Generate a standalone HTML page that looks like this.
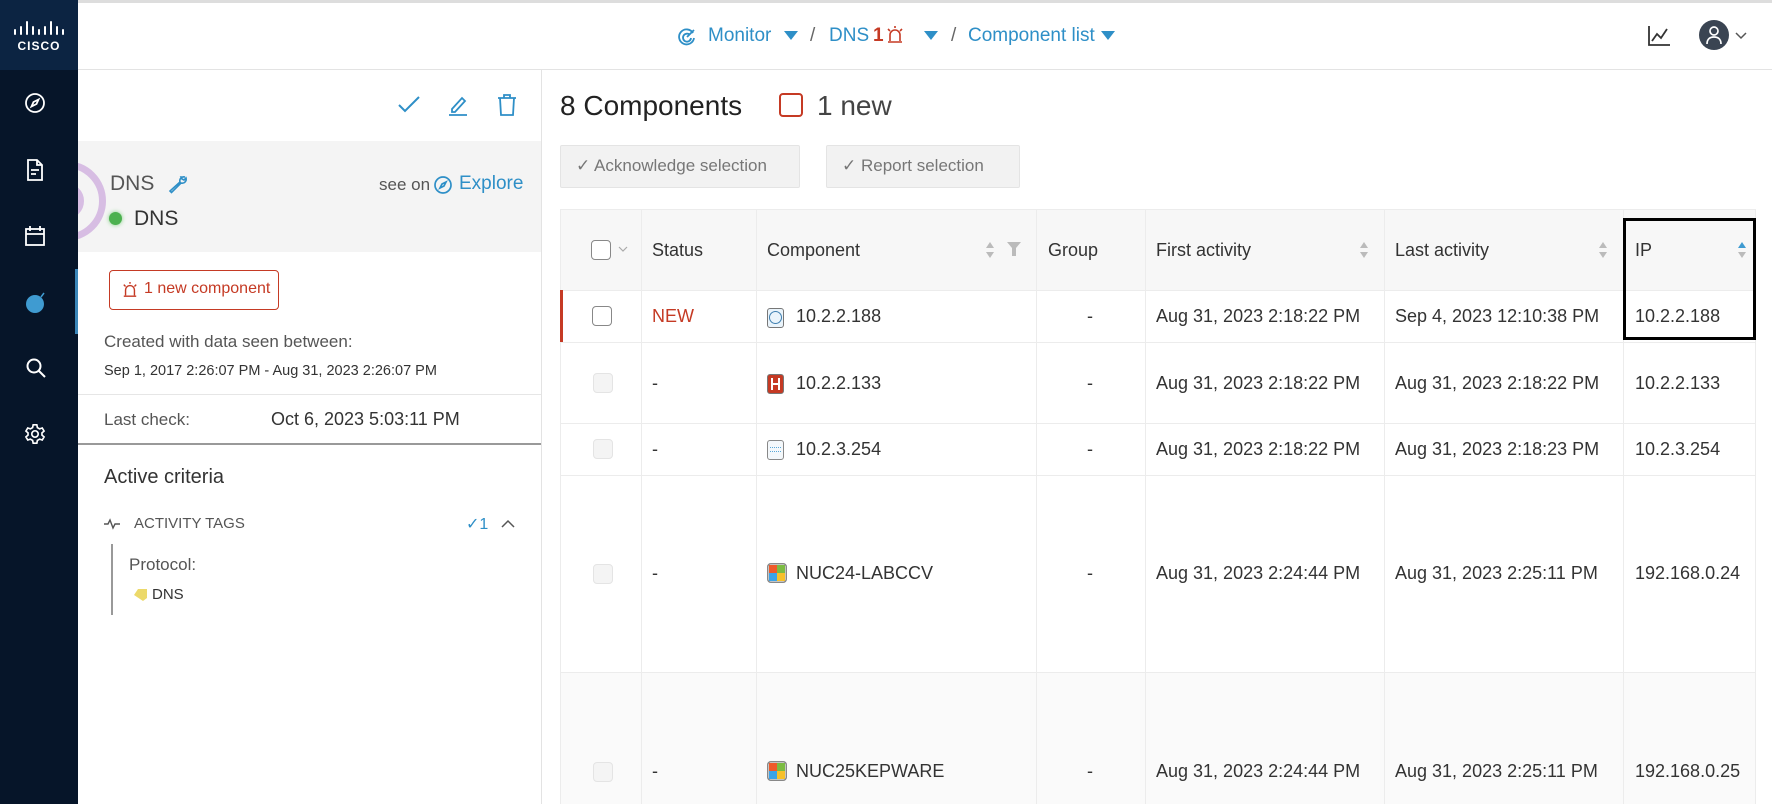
<!DOCTYPE html>
<html><head><meta charset="utf-8"><style>
*{box-sizing:border-box;margin:0;padding:0}
body{width:1772px;height:804px;overflow:hidden;background:#fff;font-family:"Liberation Sans",sans-serif;color:#333;position:relative}
.abs{position:absolute}
.side{left:0;top:0;width:78px;height:804px;background:#061529}
.logo{left:0;top:0;width:78px;height:70px;background:#0c2442}
.hdr{left:78px;top:0;width:1694px;height:70px;border-top:3px solid #ddd;border-bottom:1px solid #e3e3e3;background:#fff}
.blue{color:#2e8fc7}
.t{position:absolute;white-space:nowrap}
.vl{position:absolute;top:209px;width:1px;height:595px;background:#ececec}
.hl{position:absolute;left:560px;width:1195px;height:1px;background:#ececec}
.cb{position:absolute;width:20px;height:20px;border:1.5px solid #888;border-radius:4px;background:#fff}
.cbd{position:absolute;width:20px;height:20px;border:1px solid #e4e4e4;border-radius:4px;background:#f4f4f4}
.cell{font-size:18px;color:#333}
</style></head><body>
<div class="abs side"></div>
<div class="abs logo"></div>
<svg class="abs" style="left:12px;top:20px" width="54" height="34" viewBox="0 0 54 34">
<g stroke="#fff" stroke-width="2" stroke-linecap="round">
<line x1="3" y1="10" x2="3" y2="14"/><line x1="9" y1="7" x2="9" y2="14"/><line x1="15" y1="2" x2="15" y2="14"/><line x1="21" y1="7" x2="21" y2="14"/><line x1="27" y1="10" x2="27" y2="14"/><line x1="33" y1="7" x2="33" y2="14"/><line x1="39" y1="2" x2="39" y2="14"/><line x1="45" y1="7" x2="45" y2="14"/><line x1="51" y1="10" x2="51" y2="14"/></g>
<text x="27" y="30" fill="#fff" font-size="12" font-weight="bold" text-anchor="middle" font-family="Liberation Sans" letter-spacing="1">CISCO</text></svg>
<!-- sidebar icons -->
<svg class="abs" style="left:24px;top:92px" width="22" height="22" viewBox="0 0 22 22" fill="none" stroke="#fff" stroke-width="1.8"><circle cx="11" cy="11" r="9"/><path d="M14.5 7.5 L9.5 10 L7.5 14.5 L12.5 12 Z"/></svg>
<svg class="abs" style="left:25px;top:158px" width="20" height="24" viewBox="0 0 20 24" fill="none" stroke="#fff" stroke-width="1.8"><path d="M3 2h9l5 5v15H3z M12 2v5h5 M6 12h8 M6 16h5"/></svg>
<svg class="abs" style="left:24px;top:225px" width="22" height="22" viewBox="0 0 22 22" fill="none" stroke="#fff" stroke-width="1.8"><rect x="2" y="4" width="18" height="16"/><path d="M2 9h18 M6 1v5 M16 1v5"/></svg>
<div class="abs" style="left:75px;top:269px;width:3px;height:65px;background:#3b86b8"></div>
<svg class="abs" style="left:24px;top:291px" width="24" height="24" viewBox="0 0 24 24"><circle cx="11" cy="13" r="9" fill="#3f9bd1"/><path d="M17 6l3-4" stroke="#3f9bd1" stroke-width="1.5"/></svg>
<svg class="abs" style="left:25px;top:357px" width="22" height="22" viewBox="0 0 22 22" fill="none" stroke="#fff" stroke-width="2"><circle cx="9" cy="9" r="6.5"/><path d="M14 14l6 6"/></svg>
<svg class="abs" style="left:24px;top:423px" width="22" height="22" viewBox="0 0 24 24" fill="none" stroke="#fff" stroke-width="1.8"><circle cx="12" cy="12" r="3.5"/><path d="M10 2h4l.6 3 2.4 1.4 2.9-1 2 3.4-2.3 2v2.4l2.3 2-2 3.4-2.9-1L14.6 19 14 22h-4l-.6-3-2.4-1.4-2.9 1-2-3.4 2.3-2v-2.4l-2.3-2 2-3.4 2.9 1L9.4 5z"/></svg>
<!-- header -->
<div class="abs hdr"></div>
<svg class="abs" style="left:678px;top:28px" width="18" height="18" viewBox="0 0 18 18" fill="none" stroke="#2e8fc7" stroke-width="1.8"><path d="M15 5A7.5 7.5 0 1 0 16 10"/><path d="M12 7A4 4 0 1 0 13 10"/><path d="M9 9l7-7"/></svg>
<div class="t blue" style="left:708px;top:25px;font-size:19px">Monitor</div>
<svg class="abs" style="left:784px;top:31px" width="14" height="10"><path d="M0 0h14L7 9z" fill="#2e8fc7"/></svg>
<div class="t" style="left:810px;top:25px;font-size:19px;color:#666">/</div>
<div class="t blue" style="left:829px;top:25px;font-size:19px">DNS</div>
<div class="t" style="left:873px;top:25px;font-size:19px;color:#c53a24;font-weight:bold">1</div>
<svg class="abs" style="left:886px;top:25px" width="18" height="20" viewBox="0 0 18 20" fill="none" stroke="#c53a24" stroke-width="1.6"><path d="M4 16V10a5 5 0 0 1 10 0v6 M2 17h14 M9 1v2 M2 4l2 2 M16 4l-2 2"/></svg>
<svg class="abs" style="left:924px;top:31px" width="14" height="10"><path d="M0 0h14L7 9z" fill="#2e8fc7"/></svg>
<div class="t" style="left:951px;top:25px;font-size:19px;color:#666">/</div>
<div class="t blue" style="left:968px;top:25px;font-size:19px">Component list</div>
<svg class="abs" style="left:1101px;top:31px" width="14" height="10"><path d="M0 0h14L7 9z" fill="#2e8fc7"/></svg>
<svg class="abs" style="left:1647px;top:25px" width="24" height="22" viewBox="0 0 24 22" fill="none" stroke="#333" stroke-width="1.8"><path d="M2 1v19h21 M5 16l5-7 4 4 6-9"/></svg>
<div class="abs" style="left:1699px;top:20px;width:30px;height:30px;border-radius:50%;background:#3a4452"></div>
<svg class="abs" style="left:1705px;top:25px" width="18" height="20" viewBox="0 0 18 20" fill="none" stroke="#fff" stroke-width="1.7"><circle cx="9" cy="6" r="4"/><path d="M2 19c0-5 3-7 7-7s7 2 7 7"/></svg>
<svg class="abs" style="left:1735px;top:32px" width="12" height="8" fill="none" stroke="#555" stroke-width="1.5"><path d="M1 1l5 5 5-5"/></svg>
<!-- left panel -->
<div class="abs" style="left:541px;top:70px;width:1px;height:734px;background:#e3e3e3"></div>
<svg class="abs" style="left:398px;top:96px" width="22" height="18" fill="none" stroke="#2e8fc7" stroke-width="2"><path d="M1 9l6 6L21 1"/></svg>
<svg class="abs" style="left:447px;top:94px" width="22" height="22" fill="none" stroke="#2e8fc7" stroke-width="1.8"><path d="M5 15l10-11 3 3-10 11H5z M2 21h18"/></svg>
<svg class="abs" style="left:497px;top:94px" width="20" height="22" fill="none" stroke="#2e8fc7" stroke-width="1.8"><path d="M1 4h18 M7 4V1h6v3 M3 4l1 17h12l1-17"/></svg>
<div class="abs" style="left:78px;top:141px;width:463px;height:111px;background:#f4f4f4;overflow:hidden">
<div class="abs" style="left:-52px;top:20px;width:80px;height:80px;border-radius:50%;border:7px solid #d7bde3"></div>
<div class="abs" style="left:-30px;top:42px;width:36px;height:36px;border-radius:50%;border:6px solid #d7bde3"></div>
</div>
<div class="t" style="left:110px;top:172px;font-size:21px;color:#555">DNS</div>
<svg class="abs" style="left:168px;top:174px" width="20" height="20" fill="none" stroke="#2e8fc7" stroke-width="1.6"><path d="M17 3a4 4 0 0 0-5 5L2 17l1.5 1.5L13 9a4 4 0 0 0 5-5l-2 2-2-1-1-2z"/></svg>
<div class="abs" style="left:109px;top:212px;width:13px;height:13px;border-radius:50%;background:#4cb14f;box-shadow:0 0 4px #7ed07f"></div>
<div class="t" style="left:134px;top:207px;font-size:21px;color:#333">DNS</div>
<div class="t" style="left:379px;top:175px;font-size:17px;color:#555">see on</div>
<svg class="abs" style="left:433px;top:175px" width="20" height="20" fill="none" stroke="#2e8fc7" stroke-width="1.7"><circle cx="10" cy="10" r="8"/><path d="M13 7l-4 2-2 4 4-2z"/></svg>
<div class="t blue" style="left:459px;top:173px;font-size:19px">Explore</div>
<div class="abs" style="left:109px;top:270px;width:170px;height:40px;border:1.5px solid #c53a24;border-radius:4px"></div>
<svg class="abs" style="left:122px;top:281px" width="16" height="18" viewBox="0 0 18 20" fill="none" stroke="#c53a24" stroke-width="1.6"><path d="M4 16V10a5 5 0 0 1 10 0v6 M2 17h14 M9 1v2 M2 4l2 2 M16 4l-2 2"/></svg>
<div class="t" style="left:144px;top:280px;font-size:16px;color:#c53a24">1 new component</div>
<div class="t" style="left:104px;top:332px;font-size:17px;color:#555">Created with data seen between:</div>
<div class="t" style="left:104px;top:363px;font-size:14.5px;color:#333">Sep 1, 2017 2:26:07 PM - Aug 31, 2023 2:26:07 PM</div>
<div class="abs" style="left:78px;top:394px;width:463px;height:1px;background:#e6e6e6"></div>
<div class="t" style="left:104px;top:410px;font-size:17px;color:#555">Last check:</div>
<div class="t" style="left:271px;top:409px;font-size:18px;color:#333">Oct 6, 2023 5:03:11 PM</div>
<div class="abs" style="left:78px;top:443px;width:463px;height:2px;background:#999"></div>
<div class="t" style="left:104px;top:466px;font-size:20px;color:#333">Active criteria</div>
<svg class="abs" style="left:104px;top:518px" width="16" height="12" fill="none" stroke="#555" stroke-width="1.4"><path d="M0 6h4l2-4 3 8 2-4h5"/></svg>
<div class="t" style="left:134px;top:515px;font-size:15px;color:#555">ACTIVITY TAGS</div>
<div class="t blue" style="left:466px;top:514px;font-size:16px">✓1</div>
<svg class="abs" style="left:501px;top:519px" width="14" height="9" fill="none" stroke="#555" stroke-width="1.5"><path d="M1 8l6-6 6 6"/></svg>
<div class="abs" style="left:111px;top:544px;width:2px;height:71px;background:#999"></div>
<div class="t" style="left:129px;top:555px;font-size:17px;color:#555">Protocol:</div>
<svg class="abs" style="left:133px;top:588px" width="16" height="14"><path d="M5 1h9v9l-4 3-9-6z" fill="#ecd96a"/></svg>
<div class="t" style="left:152px;top:586px;font-size:15px;color:#333">DNS</div>
<!-- right -->
<div class="t" style="left:560px;top:90px;font-size:28px;color:#222">8 Components</div>
<div class="abs" style="left:779px;top:93px;width:24px;height:24px;border:2.5px solid #c53a24;border-radius:4px"></div>
<div class="t" style="left:817px;top:90px;font-size:28px;color:#444">1 new</div>
<div class="abs" style="left:560px;top:145px;width:240px;height:43px;background:#f2f2f2;border:1px solid #e4e4e4;border-radius:2px"></div>
<div class="t" style="left:576px;top:156px;font-size:17px;color:#777">✓ Acknowledge selection</div>
<div class="abs" style="left:826px;top:145px;width:194px;height:43px;background:#f2f2f2;border:1px solid #e4e4e4;border-radius:2px"></div>
<div class="t" style="left:842px;top:156px;font-size:17px;color:#777">✓ Report selection</div>
<!-- table -->
<div class="abs" style="left:560px;top:209px;width:1195px;height:81px;background:#f7f7f7"></div>
<div class="abs" style="left:560px;top:672px;width:1195px;height:132px;background:#fafafa"></div>
<div class="hl" style="top:209px"></div><div class="hl" style="top:290px"></div><div class="hl" style="top:342px"></div><div class="hl" style="top:423px"></div><div class="hl" style="top:475px"></div><div class="hl" style="top:672px"></div>
<div class="vl" style="left:560px"></div><div class="vl" style="left:641px"></div><div class="vl" style="left:756px"></div><div class="vl" style="left:1036px"></div><div class="vl" style="left:1145px"></div><div class="vl" style="left:1384px"></div><div class="vl" style="left:1623px"></div><div class="vl" style="left:1755px"></div>
<div class="abs" style="left:560px;top:290px;width:3px;height:52px;background:#c53a24"></div>
<div class="cb" style="left:591px;top:240px"></div>
<svg class="abs" style="left:618px;top:246px" width="10" height="7" fill="none" stroke="#aaa" stroke-width="1.2"><path d="M1 1l4 4 4-4"/></svg>
<div class="t cell" style="left:652px;top:240px">Status</div>
<div class="t cell" style="left:767px;top:240px">Component</div>
<svg class="abs" style="left:985px;top:241px" width="10" height="18"><path d="M5 1l4 6H1z M5 17l4-6H1z" fill="#bbb"/></svg>
<svg class="abs" style="left:1007px;top:242px" width="14" height="14"><path d="M0 0h14L9 6v8H5V6z" fill="#bbb"/></svg>
<div class="t cell" style="left:1048px;top:240px">Group</div>
<div class="t cell" style="left:1156px;top:240px">First activity</div>
<svg class="abs" style="left:1359px;top:241px" width="10" height="18"><path d="M5 1l4 6H1z M5 17l4-6H1z" fill="#bbb"/></svg>
<div class="t cell" style="left:1395px;top:240px">Last activity</div>
<svg class="abs" style="left:1598px;top:241px" width="10" height="18"><path d="M5 1l4 6H1z M5 17l4-6H1z" fill="#bbb"/></svg>
<div class="t cell" style="left:1635px;top:240px">IP</div>
<svg class="abs" style="left:1737px;top:241px" width="10" height="18"><path d="M5 1l4 6H1z" fill="#3f9bd1"/><path d="M5 17l4-6H1z" fill="#bbb"/></svg>
<div class="abs" style="left:1623px;top:218px;width:133px;height:122px;border:3px solid #000"></div>
<!-- row1 -->
<div class="cb" style="left:592px;top:306px"></div>
<div class="t" style="left:652px;top:306px;font-size:18px;color:#c53a24">NEW</div>
<div class="abs" style="left:767px;top:308px;width:17px;height:20px;border:1.5px solid #777;border-radius:3px;background:#eaf4fb"></div><div class="abs" style="left:769px;top:311px;width:13px;height:13px;border-radius:50%;border:1.5px solid #3f7fb0"></div>
<div class="t cell" style="left:796px;top:306px">10.2.2.188</div>
<div class="t cell" style="left:1087px;top:306px">-</div>
<div class="t cell" style="left:1156px;top:306px">Aug 31, 2023 2:18:22 PM</div>
<div class="t cell" style="left:1395px;top:306px">Sep 4, 2023 12:10:38 PM</div>
<div class="t cell" style="left:1635px;top:306px">10.2.2.188</div>
<!-- row2 -->
<div class="cbd" style="left:593px;top:373px"></div>
<div class="t cell" style="left:652px;top:373px">-</div>
<div class="abs" style="left:767px;top:374px;width:17px;height:20px;border:1.5px solid #777;border-radius:3px;background:#c53a24"></div><div class="abs" style="left:771px;top:378px;width:9px;height:12px;border:2px solid #fff;border-top:none;border-bottom:none"></div><div class="abs" style="left:771px;top:383px;width:9px;height:2px;background:#fff"></div>
<div class="t cell" style="left:796px;top:373px">10.2.2.133</div>
<div class="t cell" style="left:1087px;top:373px">-</div>
<div class="t cell" style="left:1156px;top:373px">Aug 31, 2023 2:18:22 PM</div>
<div class="t cell" style="left:1395px;top:373px">Aug 31, 2023 2:18:22 PM</div>
<div class="t cell" style="left:1635px;top:373px">10.2.2.133</div>
<!-- row3 -->
<div class="cbd" style="left:593px;top:439px"></div>
<div class="t cell" style="left:652px;top:439px">-</div>
<div class="abs" style="left:767px;top:440px;width:17px;height:20px;border:1.5px solid #888;border-radius:3px;background:#f4f8fb"></div><div class="abs" style="left:770px;top:447px;width:11px;height:5px;border-top:1px dotted #5aa8d8;border-bottom:1px dotted #5aa8d8"></div>
<div class="t cell" style="left:796px;top:439px">10.2.3.254</div>
<div class="t cell" style="left:1087px;top:439px">-</div>
<div class="t cell" style="left:1156px;top:439px">Aug 31, 2023 2:18:22 PM</div>
<div class="t cell" style="left:1395px;top:439px">Aug 31, 2023 2:18:23 PM</div>
<div class="t cell" style="left:1635px;top:439px">10.2.3.254</div>
<!-- row4 -->
<div class="cbd" style="left:593px;top:564px"></div>
<div class="t cell" style="left:652px;top:563px">-</div>
<svg class="abs" style="left:767px;top:563px" width="20" height="20"><rect x="0.75" y="0.75" width="18.5" height="18.5" rx="3" fill="#fff" stroke="#888" stroke-width="1.5"/><rect x="2" y="2" width="8" height="8" fill="#ef5a2a"/><rect x="10" y="2" width="8" height="8" fill="#7bbb42"/><rect x="2" y="10" width="8" height="8" fill="#3ca3e8"/><rect x="10" y="10" width="8" height="8" fill="#f7c02a"/></svg>
<div class="t cell" style="left:796px;top:563px">NUC24-LABCCV</div>
<div class="t cell" style="left:1087px;top:563px">-</div>
<div class="t cell" style="left:1156px;top:563px">Aug 31, 2023 2:24:44 PM</div>
<div class="t cell" style="left:1395px;top:563px">Aug 31, 2023 2:25:11 PM</div>
<div class="t cell" style="left:1635px;top:563px">192.168.0.24</div>
<!-- row5 -->
<div class="cbd" style="left:593px;top:762px"></div>
<div class="t cell" style="left:652px;top:761px">-</div>
<svg class="abs" style="left:767px;top:761px" width="20" height="20"><rect x="0.75" y="0.75" width="18.5" height="18.5" rx="3" fill="#fff" stroke="#888" stroke-width="1.5"/><rect x="2" y="2" width="8" height="8" fill="#ef5a2a"/><rect x="10" y="2" width="8" height="8" fill="#7bbb42"/><rect x="2" y="10" width="8" height="8" fill="#3ca3e8"/><rect x="10" y="10" width="8" height="8" fill="#f7c02a"/></svg>
<div class="t cell" style="left:796px;top:761px">NUC25KEPWARE</div>
<div class="t cell" style="left:1087px;top:761px">-</div>
<div class="t cell" style="left:1156px;top:761px">Aug 31, 2023 2:24:44 PM</div>
<div class="t cell" style="left:1395px;top:761px">Aug 31, 2023 2:25:11 PM</div>
<div class="t cell" style="left:1635px;top:761px">192.168.0.25</div>
</body></html>
